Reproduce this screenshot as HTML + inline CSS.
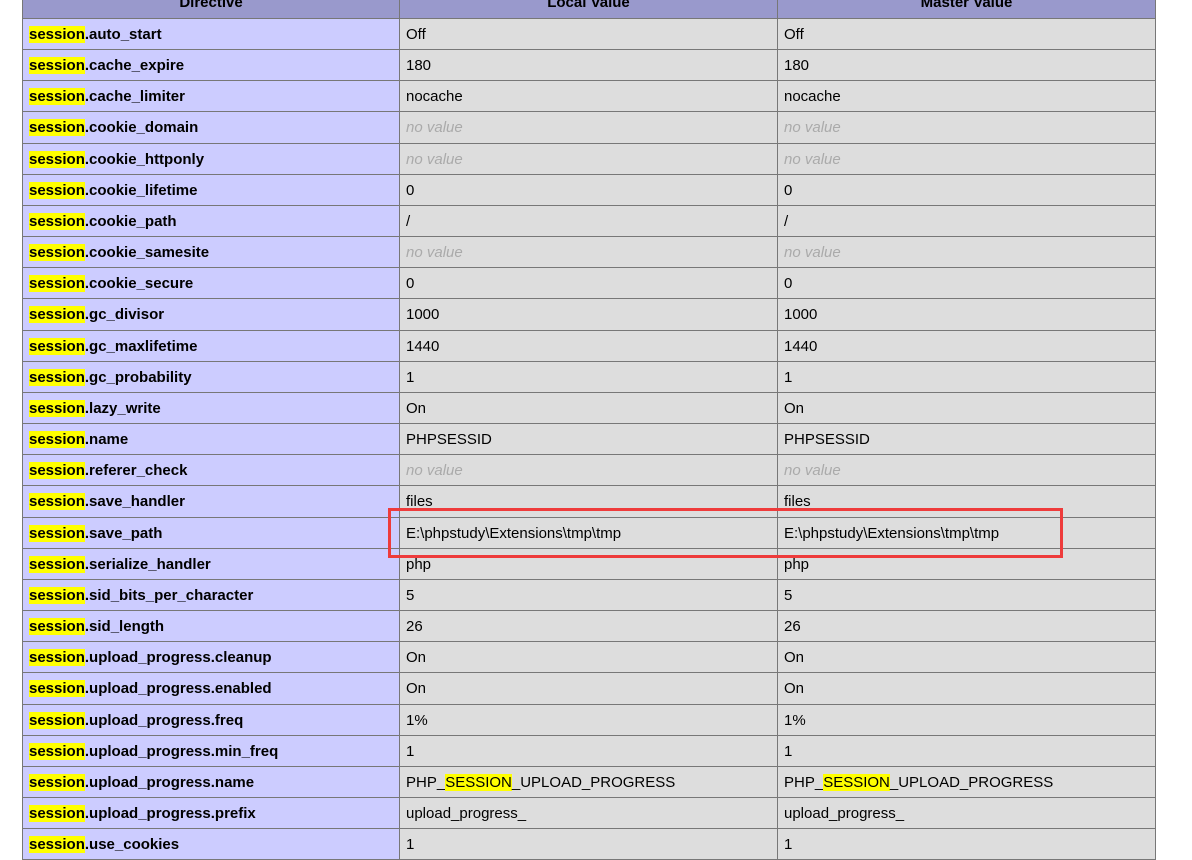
<!DOCTYPE html><html><head><style>
body{margin:0;width:1192px;height:835px;overflow:hidden;background:#fff;font-family:"Liberation Sans","Noto Sans CJK SC",sans-serif;font-size:15px;color:#000;position:relative}
.c{position:absolute;box-sizing:border-box;border:1px solid #777;padding-left:6px;display:flex;align-items:center;white-space:nowrap}
.d{left:22px;width:378px;background:#ccccff;font-weight:bold}
.l{left:399px;width:379px;background:#dddddd}
.m{left:777px;width:379px;background:#dddddd}
.h{background:#9999cc;font-weight:bold;justify-content:center;padding:0}
.y{background:#ffff00}
.n{color:#aaa;font-style:italic}
#box{position:absolute;left:388px;top:508px;width:675px;height:50px;box-sizing:border-box;border:3px solid #ee3b3b}
</style></head><body>
<div id="t"></div>
<div id="box"></div>
<script>
var rows=[["auto_start","Off"],["cache_expire","180"],["cache_limiter","nocache"],["cookie_domain",null],["cookie_httponly",null],["cookie_lifetime","0"],["cookie_path","/"],["cookie_samesite",null],["cookie_secure","0"],["gc_divisor","1000"],["gc_maxlifetime","1440"],["gc_probability","1"],["lazy_write","On"],["name","PHPSESSID"],["referer_check",null],["save_handler","files"],["save_path","E:\\phpstudy\\Extensions\\tmp\\tmp"],["serialize_handler","php"],["sid_bits_per_character","5"],["sid_length","26"],["upload_progress.cleanup","On"],["upload_progress.enabled","On"],["upload_progress.freq","1%"],["upload_progress.min_freq","1"],["upload_progress.name","PHP_<span class=y>SESSION</span>_UPLOAD_PROGRESS"],["upload_progress.prefix","upload_progress_"],["use_cookies","1"]];
var h='';
h+='<div class="c d h" style="top:-14px;height:33px">Directive</div><div class="c l h" style="top:-14px;height:33px">Local Value</div><div class="c m h" style="top:-14px;height:33px">Master Value</div>';
rows.forEach(function(r,i){var t=Math.round(18+i*31.16);var t2=Math.round(18+(i+1)*31.16);var ht=t2-t+1;var v=r[1]===null?'<span class=n>no value</span>':r[1];
h+='<div class="c d" style="top:'+t+'px;height:'+ht+'px"><span><span class=y>session</span>.'+r[0]+'</span></div>';
h+='<div class="c l" style="top:'+t+'px;height:'+ht+'px"><span>'+v+'</span></div>';
h+='<div class="c m" style="top:'+t+'px;height:'+ht+'px"><span>'+v+'</span></div>';});
document.getElementById('t').innerHTML=h;
</script>
</body></html>
